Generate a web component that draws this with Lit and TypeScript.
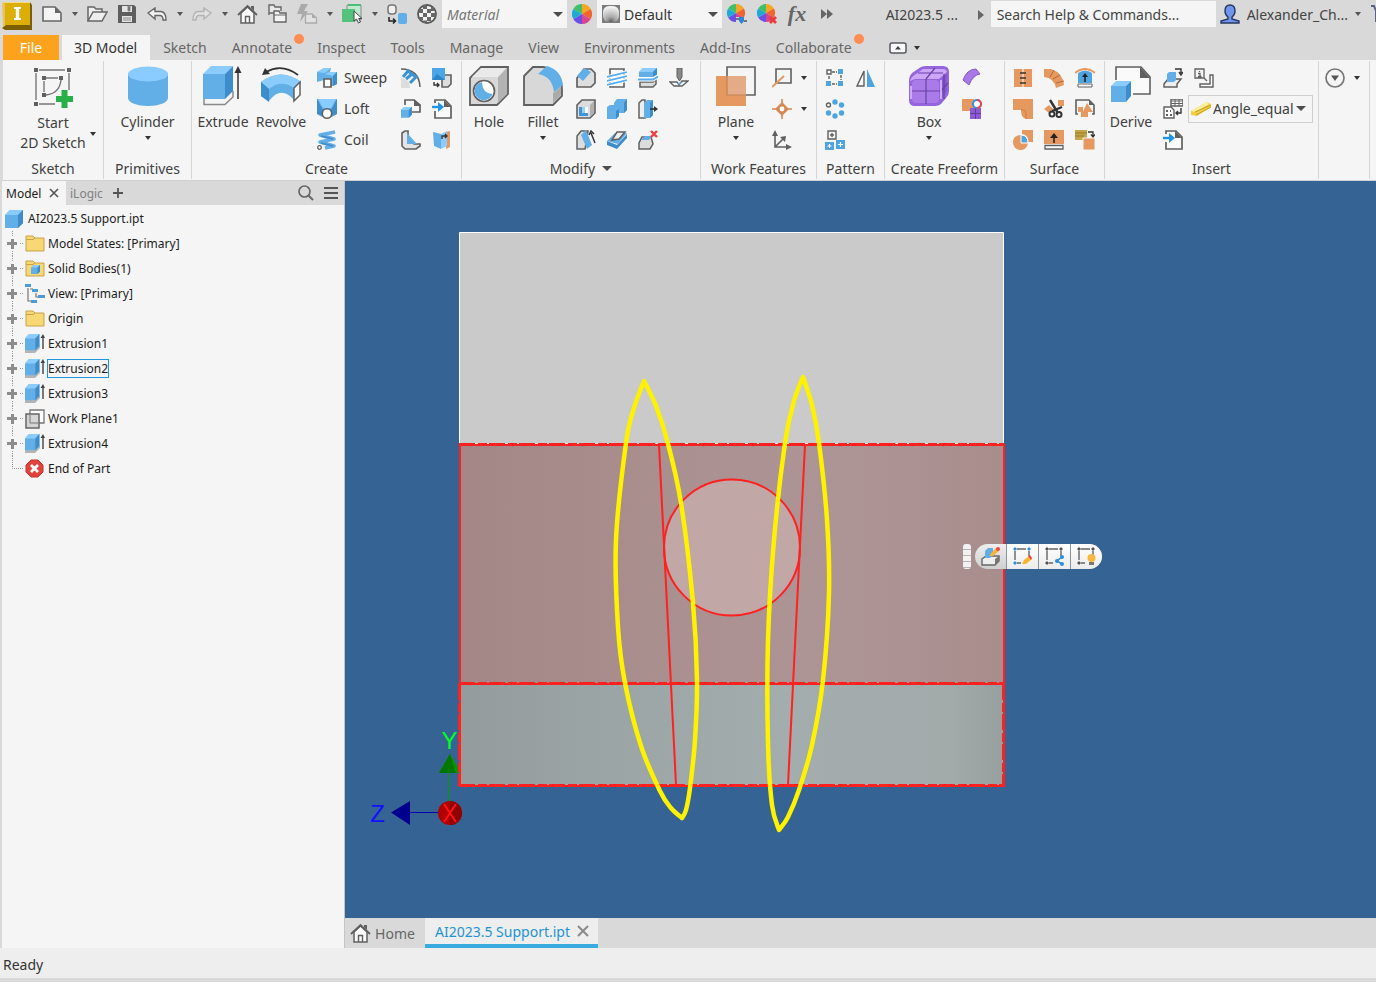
import { LitElement, html, svg, css, nothing } from "lit";
import type { TemplateResult } from "lit";
import { customElement, property } from "lit/decorators.js";
import { classMap } from "lit/directives/class-map.js";

type Art = { w: number; h: number; art: TemplateResult };
const art = (w: number, h: number, a: TemplateResult): Art => ({ w, h, art: a });
const G = "#606060";
const B = "#62aee6";
const L = "#8accff";
const D = "#3d8ccb";
const O = "#e5985f";

const cube = svg`<path d="M0 5L5 0H18V13L13 18H0Z" fill=${B}/><path d="M0 5L5 0H18L13 5Z" fill=${L}/><path d="M13 5L18 0V13L13 18Z" fill=${D}/>`;
const wheel = svg`
  <path d="M10 10L10 0A10 10 0 0 1 18.7 5Z" fill="#f6a623"/><path d="M10 10L18.7 5A10 10 0 0 1 18.7 15Z" fill="#f0642d"/>
  <path d="M10 10L18.7 15A10 10 0 0 1 10 20Z" fill="#d9468f"/><path d="M10 10L10 20A10 10 0 0 1 1.3 15Z" fill="#6b4ee6"/>
  <path d="M10 10L1.3 15A10 10 0 0 1 1.3 5Z" fill="#1fa9d4"/><path d="M10 10L1.3 5A10 10 0 0 1 10 0Z" fill="#3fbf6a"/>`;
const smallCubeGrey = svg`<path d="M1 6L6 1H19V14L14 19H1Z" fill="#dcdcdc" stroke=${G} stroke-width="1.6"/><path d="M14 6L18 2V14L14 18Z" fill="#b0b0b0"/>`;
const folder = svg`<path d="M1 2H8L10 4H19V17H1Z" fill="#f8d775" stroke="#c9a24a"/><path d="M1 5.500H8L10 4" fill="none" stroke="#c9a24a"/>`;
const house = svg`<path d="M4 9V19H17V9L10.500 3Z" fill="#f8f8f8" stroke=${G} stroke-width="1.500"/><path d="M1 11L10.500 2L20 11" fill="none" stroke=${G} stroke-width="1.800"/><path d="M14 2H17V7L14 4Z" fill=${G}/><path d="M8.500 19V12.500H12.500V19" fill="none" stroke=${G} stroke-width="1.400"/>`;
const corners = svg`<path d="M4 2H13M2 4V13M16 4V9M4 16H8" stroke="#666" stroke-width="1.400" fill="none"/><path d="M1 1H3V3H1ZM15 1H17V3H15ZM1 15H3V17H1Z" stroke-width="1"/>`;

const icons: Record<string, Art> = {
  logo: art(30, 30, svg`<path d="M0 3L3 2L4 26L1 28Z" fill="#e8c55c"/><path d="M0 28L4 25H28V2L30 5V30H3Z" fill="#7c5f00"/><path d="M3 2H28V25H3Z" fill="#dcae06"/><path d="M3 2H28V3H3Z" fill="#f4dc84"/><path d="M12 7H19V9H17.200V18H19V20H12V18H13.800V9H12Z" fill="#fff"/>`),
  new: art(20, 16, svg`<path d="M1 1H13L19 7V15H1Z" fill="#f4f4f4" stroke="#666" stroke-width="1.600"/><path d="M13 1V7H19Z" fill="#666"/>`),
  open: art(21, 18, svg`<path d="M1 16V2H7L9 4H15V7" fill="#f0f0f0" stroke="#666" stroke-width="1.500"/><path d="M1 16L6 7H20L15 16Z" fill="#eee" stroke="#666" stroke-width="1.500"/>`),
  save: art(18, 18, svg`<path d="M0 0H16L18 2V18H0Z" fill="#5e5e5e"/><path d="M4 1H14V7H4ZM4 11H14V17H4Z" fill="#e4e4e4"/><path d="M10 1H12V6H10ZM5 13H13M5 15H13" fill="#5e5e5e" stroke="#8a8a8a" stroke-width="1"/>`),
  undo: art(20, 14, svg`<path d="M1 6L8 1V4.500H14Q19 5 19 13H16Q16 8.500 13 8.500H8V12Z" fill="#f2f2f2" stroke="#666" stroke-width="1.400"/>`),
  redo: art(20, 14, svg`<path d="M19 6L12 1V4.500H6Q1 5 1 13H4Q4 8.500 7 8.500H12V12Z" fill="#e2e2e2" stroke="#b3b3b3" stroke-width="1.400"/>`),
  home: art(21, 20, house),
  copy: art(19, 20, svg`<path d="M1 11V1H6L7 3H13V7M1 9H6" fill="#e8e8e8" stroke="#666" stroke-width="1.400"/><path d="M6 7H11L12 9H18V18H6Z" fill="#f3f3f3" stroke="#666" stroke-width="1.400"/><path d="M6 11H18" stroke="#666"/>`),
  bolt: art(21, 20, svg`<path d="M4 0H11L7 7H11L3 18L5 10H0Z" fill="#aaa"/><path d="M8.500 10H15L19.500 14V19H8.500Z" fill="#e2e2e2" stroke="#aaa" stroke-width="1.300"/><path d="M15 10V14H19Z" fill="#aaa"/>`),
  pick: art(20, 20, svg`<path d="M5 1H19V16H5Z" fill="#bfe9cf" stroke="#8a8a8a"/><path d="M6 0H19V2H6Z" fill="#4dbd78"/><path d="M0 5H13V18H0Z" fill="#54c27d"/><path d="M12 7V17L14.500 15L16.500 19L18.500 18L16.700 14.500H20Z" fill="#fff" stroke="#444"/>`),
  convert: art(21, 20, svg`<rect x="1" y="1" width="8" height="9" rx="3" fill="#f0f0f0" stroke="#777" stroke-width="1.500"/><path d="M2 13V17H8M6 14.500L8.500 17L6 19.500" stroke="#222" stroke-width="1.500" fill="none"/><rect x="11" y="9" width="9" height="11" rx="2" fill=${B}/>`),
  ball: art(20, 20, svg`<circle cx="10" cy="10" r="9" fill="#f2f2f2" stroke="#555" stroke-width="1.800"/><path d="M6 1H10V5H6ZM14 3H17V7H14ZM10 5H14V9H10ZM2 5H6V9H2ZM6 9H10V13H6ZM14 9H19V13H14ZM2 13H6V16H2ZM10 13H14V17H10ZM6 16.500H10V19H6Z" fill="#666"/>`),
  wheel: art(20, 20, wheel),
  shade: art(18, 18, svg`<defs><radialGradient id="orb" cx=".5" cy="1" r=".95"><stop offset="0" stop-color="#5c5c5c"/><stop offset=".35" stop-color="#aaa"/><stop offset="1" stop-color="#f4f4f4"/></radialGradient></defs><path d="M0 0H18V18H0Z" fill="#7c7c7c"/><rect x="1" y="1" width="16" height="16" rx="6" fill="url(#orb)"/>`),
  wheelPin: art(20, 20, svg`<g transform="scale(.9)">${wheel}</g><path d="M9 13H20V20H9Z" fill="#d9d9d9"/><path d="M12 13H17V17L14.500 20L12 17Z" fill="#2b86d9"/><path d="M9 15H12M17 17H20" stroke="#555" stroke-width="1.500"/>`),
  wheelX: art(20, 20, svg`<g transform="scale(.9)">${wheel}</g><path d="M13 13L19 19M19 13L13 19" stroke="#ee3a3a" stroke-width="2.800"/>`),
  more: art(12, 10, svg`<path d="M0 0L6 5L0 10ZM6 0L12 5L6 10Z" fill="#666"/>`),
  user: art(20, 20, svg`<path d="M5 7Q5 1 10 1T15 7Q15 11 12 13V15L19 17V19H1V17L8 15V13Q5 11 5 7Z" fill="#6f95ee" stroke="#27365e" stroke-width="1.400"/>`),
  caret: art(6, 4, svg`<path d="M0 0H6L3 4Z" fill="#555"/>`),
  caretDark: art(6, 4, svg`<path d="M0 0H6L3 4Z" fill="#333"/>`),
  caretBig: art(10, 5, svg`<path d="M0 0H10L5 5Z" fill="#4d4d4d"/>`),
  right: art(6, 10, svg`<path d="M0 0L6 5L0 10Z" fill="#666"/>`),
  cart: art(6, 18, svg`<path d="M1 1H4L6 6V17" fill="none" stroke="#5b6480" stroke-width="2"/>`),
  panel: art(18, 12, svg`<rect x="1" y="1" width="16" height="10" rx="2" fill="#fafafa" stroke="#555b60" stroke-width="1.500"/><path d="M6 7.500H12L9 4Z" fill="#444"/>`),

  sketch: art(40, 42, svg`<path d="M6 3H32M3 6V33M36 6V23M6 37H22M13 11H25M11 14V25M28 13C27 22 22 27 13 28" fill="none" stroke="#777" stroke-width="1.400"/><path d="M1 1H5V5H1ZM34 1H38V5H34ZM1 35H5V39H1ZM9 9H13V13H9ZM26 9H30V13H26ZM9 26H13V30H9Z" fill="#606060"/><path d="M28.500 23H34.500V29H40V35H34.500V41H28.500V35H23V29H28.500Z" fill="#27b04a"/>`),
  cylinder: art(40, 40, svg`<path d="M0 8V32A20 8 0 0 0 40 32V8Z" fill=${B}/><ellipse cx="20" cy="8" rx="20" ry="7.500" fill=${L}/>`),
  extrude: art(40, 40, svg`<path d="M1 33V38.500H22L30 31V25" fill="#f4f4f4" stroke="#8a8a8a" stroke-width="1.500"/><path d="M0 8H22V33H0Z" fill=${B}/><path d="M0 8L8 0H30L22 8Z" fill=${L}/><path d="M22 8L30 0V25L22 33Z" fill=${D}/><path d="M35 5V33" stroke="#333" stroke-width="1.500"/><path d="M31.500 7L35 0L38.500 7Z" fill="#333"/>`),
  revolve: art(40, 40, svg`<path d="M0 16Q20 1 40 16L33 34Q20 19 8 35L0 30Z" fill=${B}/><path d="M0 16Q20 1 40 16L33 22Q20 13 8 23Z" fill=${L}/><path d="M0 16L8 23V36L0 30Z" fill=${D}/><path d="M33 22L39 16V29L33 35Z" fill="#fff" stroke=${G} stroke-width="1.500"/><path d="M37 9Q21 -3 5 6" fill="none" stroke="#333" stroke-width="1.800"/><path d="M1 9L4 2L9 8Z" fill="#333"/>`),
  sweep: art(20, 20, svg`<path d="M0 4L7 0H14L13 4H20V16L16 18H7V12L0 14Z" fill=${B}/><path d="M0 4L7 0H14L8 5ZM8 6L12 4H20L16 8Z" fill=${L}/><path d="M16 8L20 4V16L16 18Z" fill=${D}/><path d="M7 11H14V19H7Z" fill="#fff" stroke=${G} stroke-width="1.700"/>`),
  loft: art(20, 20, svg`<path d="M0 0H20V15L15 18H5L0 15Z" fill=${B}/><path d="M0 0L6 11V17L0 15ZM20 0L14 11V17L20 15Z" fill=${D}/><path d="M1 0H19L14 9H6Z" fill=${L}/><circle cx="10" cy="14.500" r="4.700" fill="#fff" stroke=${G} stroke-width="1.600"/>`),
  coil: art(20, 20, svg`<path d="M18 2L3 5L17 9L3 12L17 16L8 18" fill="none" stroke=${B} stroke-width="3.600" stroke-linejoin="round"/><path d="M4 6L16 9M4 13L16 16" stroke=${D} stroke-width="1.500"/><circle cx="2.500" cy="17.500" r="1.800" fill="#fff" stroke=${G} stroke-width="1.300"/>`),
  emboss: art(20, 20, svg`<path d="M0 1Q18 1 19 19" fill="none" stroke=${G} stroke-width="1.500"/><path d="M0 10Q9 11 9 20H0Z" fill="#ddd"/><path d="M2 9L7 3L15 9L9 15M5 11L11 6" fill="none" stroke="#3a94d6" stroke-width="3"/>`),
  derive: art(20, 20, svg`<path d="M4 6V1H13L19 6V13H11" fill="none" stroke=${G} stroke-width="1.700"/><path d="M13 0V7H20Z" fill=${G}/><g transform="translate(0 8) scale(.6)">${cube}</g>`),
  rib: art(20, 20, svg`<path d="M1 3L4 1H7V8L13 14H19V16L15 19H4L1 16Z" fill="#e4e4e4" stroke=${G} stroke-width="1.600"/><path d="M6 3V14H16Z" fill=${B}/>`),
  decal: art(20, 20, svg`<path d="M10 8L13 7H19V16L16 19H10Z" fill="#ddd" stroke=${G} stroke-width="1.600"/><path d="M0 0H13V12H0Z" fill="#4aa6e6"/><path d="M0 12L5 6L13 12Z" fill="#2e86c8"/><path d="M2 14V17H7M5 15L7 17L5 19" fill="none" stroke="#333" stroke-width="1.400"/>`),
  importIn: art(20, 20, svg`<path d="M3 4V1H13L19 7V19H3V12" fill="#fafafa" stroke=${G} stroke-width="1.700"/><path d="M12 1V8H19Z" fill=${G}/><path d="M0 8H7" stroke="#2294e8" stroke-width="2.400"/><path d="M6 3L12 8L6 13Z" fill="#2294e8"/>`),
  unwrap: art(20, 20, svg`<path d="M14 2L18 1V17L14 19Z" fill=${O}/><path d="M1 2L9 4V19L2 16Z" fill=${B}/><path d="M9 4L15 1V16L9 19Z" fill=${L}/><path d="M10 9V6H15M13 4L15 6L13 8" fill="none" stroke="#333" stroke-width="1.400"/>`),
  hole: art(40, 40, svg`<path d="M1 12L12 1H39V28L28 39H1Z" fill="#d8d8d8" stroke=${G} stroke-width="1.800"/><path d="M29 11L38 2V28L29 37Z" fill="#b3b3b3"/><path d="M3 11L12 2H37L29 11Z" fill="#eaeaea"/><circle cx="15" cy="25" r="10.500" fill="#fff" stroke=${G} stroke-width="1.700"/><path d="M13 16A9.200 9.200 0 1 0 23.500 28Q13 27 13 16Z" fill=${B}/>`),
  fillet: art(40, 40, svg`<path d="M1 10L10 1H20Q39 4 39 24V30L30 39H1Z" fill="#d8d8d8" stroke=${G} stroke-width="1.800"/><path d="M30 27L38 21V29L30 37Z" fill="#aaa"/><path d="M15 8L24 0Q38 4 40 19L31 26Q29 10 15 8Z" fill=${B}/>`),
  chamfer: art(20, 20, svg`<path d="M1 10V19H15L19 15V5L15 1H8Z" fill="#dedede" stroke=${G} stroke-width="1.700"/><path d="M1 8L8 0L15 4L7 13Z" fill=${B}/>`),
  thread: art(20, 20, svg`<path d="M3 1H17V19H3Z" fill="#fafafa" stroke=${G} stroke-width="1.600"/><path d="M0 9L20 4M0 13L20 8M0 17L20 12" stroke="#fff" stroke-width="3.500"/><path d="M0 9L20 4M0 13L20 8M0 17L20 12" stroke="#55aced" stroke-width="1.700"/>`),
  split: art(20, 20, svg`<path d="M2 14H15L18 11V16L15 19H2Z" fill="#ddd" stroke=${G} stroke-width="1.500"/><path d="M1 4L5 0H19V7L15 9H1Z" fill=${B}/><path d="M1 4L5 0H19L15 4Z" fill=${L}/><path d="M15 4L19 0V7L15 9Z" fill=${D}/><path d="M0 11.500H15L20 8.500" stroke="#fff" stroke-width="4" fill="none"/><path d="M0 11.500H15L20 8.500" stroke="#55aced" stroke-width="2" fill="none"/>`),
  mark: art(20, 20, svg`<path d="M8 0H13V9L10.500 13L8 9Z" fill="#888" stroke=${G}/><path d="M1 14H8L10 17L13 13H19L13 18H5Z" fill="#fafafa" stroke=${G} stroke-width="1.300"/><path d="M8 15L14 14L10 17Z" fill=${B}/>`),
  shell: art(20, 20, svg`${smallCubeGrey}<path d="M3 8H12V17H3Z" fill="#fff"/><path d="M3 8H6V14H12V17H3Z" fill="#3f95d7"/><path d="M6 8H9V14H6Z" fill="#9ad0f5"/>`),
  combine: art(20, 20, svg`<path d="M0 8L3 6H7V4L10 0H20V11L17 14H12V17L9 20H0Z" fill=${B}/><path d="M17 4L20 0V11L17 14ZM9 12L12 10V17L9 20Z" fill=${D}/>`),
  thicken: art(20, 20, svg`<path d="M1 4L4 1H7V19H1Z" fill="#eee" stroke=${G} stroke-width="1.500"/><path d="M6 4L9 1H15V16L12 19H6Z" fill=${B}/><path d="M12 4L15 1V16L12 19Z" fill=${D}/><path d="M12 10H17" stroke="#333" stroke-width="1.600"/><path d="M16 7L20 10L16 13Z" fill="#333"/>`),
  draft: art(20, 20, svg`<path d="M1 19V6L5 1H12L9 19Z" fill="#ddd" stroke=${G} stroke-width="1.500"/><path d="M5 5L10 0L16 15L11 19Z" fill=${B}/><path d="M15 3L19 13M13 5L15 1L18 4" stroke="#333" stroke-width="1.500" fill="none"/>`),
  direct: art(20, 20, svg`<path d="M0 11V15L10 19L20 8V4L10 15Z" fill=${D}/><path d="M0 11L8 3H20L11 14Z" fill=${B}/><path d="M5 10L10 2H18L12 9Z" fill="#eee" stroke=${G} stroke-width="1.500"/>`),
  deleteFace: art(20, 20, svg`<path d="M1 19V13L4 7H13L15 14L12 19Z" fill="#ddd" stroke=${G} stroke-width="1.500"/><path d="M3 10L7 6H14L11 10Z" fill=${B}/><path d="M13 1L19 7M19 1L13 7" stroke="#ed4242" stroke-width="2.400"/>`),
  plane: art(40, 40, svg`<path d="M11 1H39V29H11Z" fill="none" stroke=${G} stroke-width="1.600"/><path d="M0 10H30V40H0Z" fill=${O}/><path d="M11 10H30V29H11Z" fill="#e3ab86"/><path d="M11 10V29H30" fill="none" stroke="#bf8358" stroke-width="1.200"/>`),
  axis: art(20, 20, svg`<path d="M4 1H19V15H4Z" fill="none" stroke=${G} stroke-width="1.600"/><path d="M0 19L12 8" stroke=${O} stroke-width="2"/>`),
  point: art(20, 20, svg`<path d="M10 0V20M0 10H20" stroke="#d98752" stroke-width="1.600"/><path d="M10 3L17 10L10 17L3 10Z" fill="#d98752"/><circle cx="10" cy="10" r="2.400" fill="#fff"/>`),
  ucs: art(20, 20, svg`<path d="M3 3V17H17M3 17L12 8" fill="none" stroke=${G} stroke-width="1.600"/><path d="M0 6L3 0L6 6ZM14 14L20 17L14 20ZM8 7L14 6L13 12Z" fill=${G}/>`),
  rectPat: art(20, 20, svg`<path d="M7 4H12M7 16H12M4 8V12M16 7V12" stroke=${G} stroke-width="1.400" stroke-dasharray="3 1"/><path d="M2 2H6V6H2Z" fill="#fff" stroke=${G} stroke-width="1.400"/><path d="M13 1H18V6H13ZM1 13H6V18H1ZM13 13H18V18H13Z" fill="#4fa3de"/>`),
  circPat: art(20, 20, svg`<circle cx="3.500" cy="6" r="2" fill="#fff" stroke=${G} stroke-width="1.400"/><g fill="#4fa3de"><circle cx="10" cy="3" r="2.700"/><circle cx="16.500" cy="6" r="2.700"/><circle cx="16.500" cy="14" r="2.700"/><circle cx="10" cy="17" r="2.700"/><circle cx="3.500" cy="14" r="2.700"/></g>`),
  sketchPat: art(20, 20, svg`<path d="M3 1H11V9H3ZM7 3V7M5 5H9" fill="none" stroke=${G} stroke-width="1.400"/><path d="M0 12H9V20H0ZM11 10H20V19H11Z" fill="#4fa3de"/><path d="M4.500 14V18M2.500 16H6.500M15.500 12V17M13 14.500H18" stroke="#fff" stroke-width="1.200"/>`),
  mirror: art(20, 20, svg`<path d="M8 3V18H1Z" fill="none" stroke=${G} stroke-width="1.400"/><path d="M11 1L19 19H11Z" fill="#4fa3de"/>`),
  boxForm: art(40, 40, svg`<path d="M0 15Q0 8 6 5L12 1Q14 0 18 0H34Q40 0 40 6V25Q40 29 37 32L32 38Q30 40 26 40H6Q0 40 0 34Z" fill="#9465dc"/><path d="M1 15Q2 11 7 8L14 3H34Q37 3 38 6L30 13H6Z" fill="#cda6fa"/><rect x="3" y="14" width="27" height="23" rx="4" fill="#aa7be8"/><path d="M33 12L38 7V25L33 32Z" fill="#8857d2"/><path d="M17 13V38M3 25H32L39 17M17 13L26 2M9 7H34M35 8V33" fill="none" stroke="#67419f" stroke-width="1.200"/><path d="M2 20V33M32 14V33" stroke="#d9bdfb" stroke-width="1.600"/>`),
  faceForm: art(20, 20, svg`<path d="M1 12Q5 1 14 1L18 6Q11 7 7 17Z" fill="#a878e6" stroke="#8757ca"/>`),
  convertForm: art(20, 20, svg`<path d="M0 0H12V12H0Z" fill=${O}/><path d="M8 9H19V20H8Z" fill="#8d5ad3"/><path d="M13.500 9V20M8 14.500H19" stroke="#5f3ba1"/><circle cx="15" cy="5" r="4" fill="#fff" stroke="#2d93e5" stroke-width="2"/><path d="M15 1A4 4 0 0 1 15 9" fill="none" stroke="#ee4848" stroke-width="2"/>`),
  stitch: art(20, 20, svg`<path d="M1 1H19V19H1Z" fill=${O}/><path d="M10 0V20" stroke="#fff" stroke-width="1"/><path d="M7 5H13M7 10H13M7 15H13" stroke="#333" stroke-width="1.500"/>`),
  ruled: art(20, 20, svg`<path d="M0 1H7Q19 5 20 17L12 20Q10 10 0 9Z" fill=${O}/><path d="M6 9L10 2M9 11L16 7M12 15L20 13" stroke="#b46c38"/>`),
  replace: art(20, 20, svg`<path d="M0 5Q10 -3 20 5" fill="none" stroke=${O} stroke-width="2"/><path d="M3 5Q10 0 17 5V15H3Z" fill="#4fa3de"/><path d="M10 14V7" stroke="#222" stroke-width="1.600"/><path d="M7 9L10 5L13 9Z" fill="#222"/><path d="M3 16H17V19H3Z" fill="#fff" stroke=${G}/>`),
  patch: art(20, 20, svg`<path d="M0 0H20V20H13Q8 19 8 11H0Z" fill=${O}/><path d="M8 11H11Q13 11 13 16V20" fill="none" stroke="#cf7f45"/>`),
  trim: art(20, 20, svg`<path d="M14 1H20V7H14ZM0 10L5 6L9 10L5 14Z" fill=${O}/><path d="M6 1L14 14M18 8L8 12" stroke="#333" stroke-width="2.400"/><circle cx="15" cy="15.500" r="2.500" fill="none" stroke="#333" stroke-width="2"/><circle cx="8" cy="15" r="2.500" fill="none" stroke="#333" stroke-width="2"/>`),
  repair: art(20, 20, svg`<path d="M3 15H1V1H14L19 6V15H17" fill="none" stroke=${G} stroke-width="1.600"/><path d="M14 1V6H19Z" fill=${G}/><path d="M3 8H8V13H3ZM12 4L18 13H8ZM6 12H13V18H6Z" fill=${O}/>`),
  extend: art(20, 20, svg`<path d="M0 12A7.500 7.500 0 1 0 15 13L9 9V5Q0 5 0 12ZM9 0H20V12H15Q16 5 9 4Z" fill=${O}/><path d="M8 5Q15 5 15 13H8Z" fill="#4fa3de" stroke="#fff"/>`),
  boundary: art(20, 20, svg`<path d="M0 0H20V14H0Z" fill=${O}/><path d="M10 13V6" stroke="#222" stroke-width="1.600"/><path d="M6 8L10 3L14 8Z" fill="#222"/><path d="M1 15.500H19V19H1Z" fill="#fff" stroke=${G} stroke-width="1.300"/>`),
  fit: art(20, 20, svg`<path d="M0 0H12V10H0Z" fill="#c4a64a"/><path d="M0 3H12M0 6H9" stroke="#937a28"/><path d="M8 8H20V20H8Z" fill=${O} stroke="#f5f5f5"/><path d="M13 2H18V6M16 4.500L18 7L20 4.500" fill="none" stroke="#333" stroke-width="1.300"/>`),
  deriveBig: art(40, 40, svg`<path d="M5 14V1H30L39 11V28H22" fill="#fafafa" stroke=${G} stroke-width="1.600"/><path d="M29 1L39 12H29Z" fill=${G}/><path d="M0 20H15V36H0Z" fill=${B}/><path d="M0 20L5 15H20L15 20Z" fill=${L}/><path d="M15 20L20 15V30L15 36Z" fill=${D}/>`),
  place: art(20, 20, svg`<path d="M1 16L5 11H18L14 16V19H1Z" fill="#eee" stroke=${G} stroke-width="1.500"/><path d="M4 6L6 4H13V12L11 14H4Z" fill=${B}/><path d="M12 1H18V5M16 4L18 7L20 4" fill="none" stroke="#333" stroke-width="1.400"/>`),
  table: art(20, 20, svg`<path d="M8 0H20V7H8Z" fill="#fff" stroke=${G} stroke-width="1.400"/><path d="M8 2H20M8 4.500H20M12 0V7M16 0V7" stroke=${G}/><path d="M1 8H8L11 11V19H1Z" fill="#fff" stroke=${G} stroke-width="1.400"/><path d="M3 12H5M7 12H8M3 16H5M7 16H9" stroke=${G} stroke-width="2"/><path d="M18 9V14H13M15 12L13 14L15 16" fill="none" stroke="#333" stroke-width="1.400"/>`),
  callout: art(20, 20, svg`<path d="M1 1H10V10H1ZM5.500 3V4M4 5.500H6V8M4 8.500H7.500M10 10L13 13" fill="none" stroke=${G} stroke-width="1.300"/><path d="M16 7H19V19H6V16H16Z" fill="#fff" stroke=${G} stroke-width="1.400"/>`),
  angle: art(20, 16, svg`<path d="M0 10L16 1L20 3V6L6 15L0 14Z" fill="#f3cf45"/><path d="M0 10L16 1L18 3L4 11Z" fill="#fdf0a0"/><path d="M4 11L20 4M5 14L20 6" stroke="#c7a020"/>`),
  circleDown: art(20, 20, svg`<circle cx="10" cy="10" r="9" fill="#f5f5f5" stroke="#777" stroke-width="1.700"/><path d="M6 7.500H14L10 13Z" fill="#555"/>`),

  x: art(10, 10, svg`<path d="M1 1L9 9M9 1L1 9" stroke="#555" stroke-width="1.600"/>`),
  xLight: art(12, 12, svg`<path d="M1 1L11 11M11 1L1 11" stroke="#8a8a8a" stroke-width="2"/>`),
  plus: art(10, 10, svg`<path d="M5 0V10M0 5H10" stroke="#555" stroke-width="1.800"/>`),
  search: art(16, 16, svg`<circle cx="6.500" cy="6.500" r="5.500" fill="none" stroke="#666" stroke-width="1.700"/><path d="M10.500 10.500L15 15" stroke="#666" stroke-width="2"/>`),
  menu: art(14, 12, svg`<path d="M0 1H14M0 6H14M0 11H14" stroke="#555" stroke-width="1.800"/>`),
  part: art(18, 18, cube),
  folder: art(20, 20, folder),
  bodies: art(20, 20, svg`${folder}<g transform="translate(6 6) scale(.5)">${cube}</g>`),
  view: art(20, 20, svg`<path d="M3 4V17H6M5 5H8M11 9V13H13" fill="none" stroke="#777" stroke-width="1.200"/><path d="M0 0H6V3H0ZM7 5H13V8H7ZM13 11H20V14H13ZM6 16H12V19H6Z" fill="#4a9bd8"/>`),
  feature: art(20, 20, svg`<path d="M0 16H10L15 11V14L10 19H0Z" fill="#b4b4b4"/><g transform="scale(.8 .9)">${cube}</g><path d="M18 2V15" stroke="#444" stroke-width="1.400"/><path d="M15.500 4L18 0L20 4Z" fill="#444"/>`),
  workPlane: art(20, 20, svg`<path d="M5 1H19V14H5Z" fill="#fff" stroke="#777" stroke-width="1.300"/><path d="M1 5H14V19H1Z" fill="#ccc" fill-opacity=".8" stroke="#666" stroke-width="1.500"/><path d="M5 5V14H14" fill="none" stroke="#888"/>`),
  end: art(20, 20, svg`<path d="M6 1H13L18 6V13L13 18H6L1 13V6Z" fill="#e0433c" stroke="#c43530"/><path d="M6 6L13 13M13 6L6 13" stroke="#fff" stroke-width="2.800"/>`),

  editFeature: art(20, 19, svg`<path d="M1 12L5 9H18V14L14 18H1Z" fill="#eee" stroke="#666" stroke-width="1.400"/><path d="M14 12L18 9V14L14 18Z" fill="#777"/><path d="M4 4L7 1H12V8L9 11H4Z" fill=${B}/><path d="M9 9L10 6L15 1L18 4L12 9Z" fill="#f8b43c"/><circle cx="17" cy="2" r="2" fill="#ee4444"/>`),
  editSketch: art(20, 19, svg`<g fill="#2a8fe0" stroke="#2a8fe0">${corners}</g><path d="M9 17L11 13L16 9L19 12L13 17Z" fill="#fbb62f"/><path d="M15 9L17 8L19 11L18 13Z" fill="#ee4444"/>`),
  shareSketch: art(20, 19, svg`<g fill="#555" stroke="#555">${corners}</g><path d="M17 10L12 14L17 17" fill="none" stroke="#2a8fe0" stroke-width="1.600"/><g fill="#2a8fe0"><circle cx="17" cy="10" r="2"/><circle cx="12" cy="14" r="2"/><circle cx="17" cy="17" r="2"/></g>`),
  showSketch: art(20, 19, svg`<g fill="#555" stroke="#555">${corners}</g><circle cx="14.500" cy="11" r="4" fill="#f6b73c"/><path d="M12 15H17V18H12Z" fill="#777"/>`),
};

@customElement("cad-icon")
class CadIcon extends LitElement {
  @property() name = "";
  static styles = css`
    :host { display: inline-flex; flex: none; }
    svg { display: block; }
  `;
  render() {
    const i = icons[this.name];
    return i ? html`<svg width=${i.w} height=${i.h} viewBox="0 0 ${i.w} ${i.h}" aria-hidden="true">${i.art}</svg>` : nothing;
  }
}

const ico = (name: string) => html`<cad-icon name=${name}></cad-icon>`;

const buttonReset = css`
  * { box-sizing: border-box; }
  button, select, input { font: inherit; color: inherit; margin: 0; padding: 0; border: 0; background: none; border-radius: 0; }
  button { display: inline-flex; align-items: center; justify-content: center; cursor: default; white-space: nowrap; }
  select { appearance: none; }
`;

@customElement("cad-quickbar")
class CadQuickbar extends LitElement {
  static styles = [buttonReset, css`
    :host { display: flex; align-items: center; height: 31px; padding-bottom: 3px; color: #444; font-size: 14px; overflow: hidden; }
    .logo { width: 37px; padding-left: 2px; justify-content: flex-start; align-self: flex-start; flex: none; }
    .tool { width: 30px; height: 26px; }
    .drop { width: 15px; height: 26px; }
    .pick { display: grid; grid-template-columns: 1fr 16px; align-items: center; width: 125px; height: 28px; background: #f5f5f5; color: #333; }
    .pick select { grid-area: 1 / 1 / 2 / 3; width: 100%; height: 28px; padding-left: 5px; }
    .pick cad-icon { pointer-events: none; }
    .pick .caret { grid-area: 1 / 2; margin-left: 2px; }
    .pick .lead { grid-area: 1 / 1; margin-left: 5px; }
    .material select { font-style: italic; color: #777; }
    .look select { padding-left: 27px; }
    .fx { font: italic bold 22px/22px "Liberation Serif", serif; color: #666; }
    .doc { margin-left: auto; width: 92px; }
    .help { width: 225px; height: 26px; padding: 0 6px; background: #f5f5f5; color: #333; font-size: 14px; }
    .help::placeholder { color: #444; opacity: 1; }
    .play { width: 10px; margin-right: 3px; }
    .account { gap: 7px; padding-left: 4px; }
    .cart { width: 15px; justify-content: flex-end; }
  `];
  render() {
    const tool = (n: string, label: string, drop = false) => html`<button class="tool" aria-label=${label}>${ico(n)}</button>${drop ? html`<button class="drop" aria-label="${label} options">${ico("caret")}</button>` : nothing}`;
    return html`
      <button class="logo" aria-label="Application menu">${ico("logo")}</button>
      ${tool("new", "New", true)}${tool("open", "Open")}${tool("save", "Save")}${tool("undo", "Undo", true)}${tool("redo", "Redo", true)}
      ${tool("home", "Home")}${tool("copy", "Projects")}${tool("bolt", "Update", true)}${tool("pick", "Select", true)}${tool("convert", "Convert")}${tool("ball", "Appearance")}
      <div class="pick material"><select aria-label="Material"><option>Material</option></select><cad-icon class="caret" name="caretBig"></cad-icon></div>
      ${tool("wheel", "Colour wheel")}
      <div class="pick look"><select aria-label="Appearance style"><option>Default</option></select><cad-icon class="lead" name="shade"></cad-icon><cad-icon class="caret" name="caretBig"></cad-icon></div>
      ${tool("wheelPin", "Adjust")}${tool("wheelX", "Clear")}
      <button class="tool fx" aria-label="Parameters">fx</button>
      <button class="tool" aria-label="More">${ico("more")}</button>
      <span class="doc">AI2023.5 ...</span>
      <span class="play">${ico("right")}</span>
      <input class="help" type="search" aria-label="Search help" placeholder="Search Help &amp; Commands..." />
      <button class="account">${ico("user")}Alexander_Ch...${ico("caret")}</button>
      <button class="cart" aria-label="Store">${ico("cart")}</button>`;
  }
}

const tabNames = ["File", "3D Model", "Sketch", "Annotate", "Inspect", "Tools", "Manage", "View", "Environments", "Add-Ins", "Collaborate"];

@customElement("cad-tabs")
class CadTabs extends LitElement {
  static styles = [buttonReset, css`
    :host { display: flex; align-items: flex-end; height: 29px; padding-left: 3px; color: #666; font-size: 14px; }
    .tab { position: relative; height: 25px; padding: 0 12px 0 13px; }
    .file { background: #fba31c; color: #fff; width: 56px; margin-right: 3px; padding: 0; }
    .active { background: #f5f5f5; color: #333; padding: 0 13px 0 12px; }
    .new::after { content: ""; position: absolute; right: 0; top: -1px; width: 10px; height: 10px; border-radius: 50%; background: #ff8c50; }
    .mode { height: 25px; gap: 7px; margin-left: 25px; }
  `];
  render() {
    return html`${tabNames.map((t, i) => html`<button class=${classMap({ tab: true, file: i === 0, active: i === 1, new: t === "Annotate" || t === "Collaborate" })}>${t}</button>`)}
      <button class="mode" aria-label="Ribbon display">${ico("panel")}${ico("caretDark")}</button>`;
  }
}

@customElement("cad-ribbon")
class CadRibbon extends LitElement {
  static styles = [buttonReset, css`
    :host { display: grid; grid-template-columns: 101px 88px 270px 239px 116px 68px 120px 100px 214px 51px 1fr; height: 121px; margin-left: 3px; background: #f5f5f5; border-bottom: 1px solid #d0d0d0; color: #404040; font-size: 14px; line-height: 20px; }
    .panel { display: flex; flex-direction: column; border-right: 1px solid #d6d6d6; margin: 1px 0; min-width: 0; }
    .tools { display: flex; flex: 1; justify-content: center; padding-top: 1px; }
    .name { margin: 0; height: 21px; font-size: 14px; font-weight: 400; text-align: center; white-space: nowrap; display: flex; gap: 7px; align-items: center; justify-content: center; }
    .big { flex: none; flex-direction: column; justify-content: flex-start; height: 80px; margin-top: 4px; }
    .big .cap { height: 20px; margin-top: 6px; }
    .big .drop-mark { margin-top: 4px; }
    .w60 { width: 60px; }
    .w58 { width: 58px; }
    .w54 { width: 54px; }
    .w52 { width: 52px; }
    .start { flex-direction: row; align-items: flex-end; height: 87px; padding-left: 10px; }
    .start .stack { display: flex; flex-direction: column; align-items: center; }
    .start .stack span { height: 20px; }
    .start .stack .first { margin-top: 4px; }
    .start .side { margin: 0 0 17px 4px; }
    .grid { display: grid; grid-auto-flow: column; grid-template-rows: repeat(3, 31px); grid-auto-columns: 31px; }
    .small { width: 31px; height: 31px; }
    .rows { display: grid; grid-template-rows: repeat(3, 31px); }
    .line { display: flex; align-items: center; }
    .labelled { gap: 7px; justify-content: flex-start; padding-left: 7px; height: 31px; width: 85px; }
    .drop { width: 14px; }
    .left { justify-content: flex-start; }
    .inset { justify-content: flex-start; padding-left: 2px; }
    .pick { display: grid; grid-template-columns: 24px 1fr 16px; align-items: center; width: 125px; height: 28px; border: 1px solid #cfcfcf; }
    .pick select { grid-area: 1 / 1 / 2 / 4; width: 100%; height: 26px; padding-left: 24px; }
    .pick .lead { grid-area: 1 / 1; margin-left: 2px; pointer-events: none; }
    .pick .caret { grid-area: 1 / 3; pointer-events: none; }
  `];
  private small(n: string) { return html`<button class="small" aria-label=${n}>${ico(n)}</button>`; }
  private big(n: string, label: string, cls: string, drop = false) {
    return html`<button class="big ${cls}">${ico(n)}<span class="cap">${label}</span>${drop ? html`<cad-icon class="drop-mark" name="caretDark"></cad-icon>` : nothing}</button>`;
  }
  private grid(names: string[]) { return html`<div class="grid">${names.map((n) => this.small(n))}</div>`; }
  private panel(name: string | TemplateResult, body: TemplateResult, cls = "") {
    return html`<section class="panel"><div class="tools ${cls}">${body}</div><h2 class="name">${name}</h2></section>`;
  }
  render() {
    return html`
      ${this.panel("Sketch", html`<button class="big start"><span class="stack">${ico("sketch")}<span class="first">Start</span><span>2D Sketch</span></span><cad-icon class="side" name="caretDark"></cad-icon></button>`)}
      ${this.panel("Primitives", this.big("cylinder", "Cylinder", "w60", true))}
      ${this.panel("Create", html`
        ${this.big("extrude", "Extrude", "w58")}${this.big("revolve", "Revolve", "w58")}
        <div class="rows">${[["sweep", "Sweep"], ["loft", "Loft"], ["coil", "Coil"]].map(([n, l]) => html`<button class="labelled">${ico(n)}${l}</button>`)}</div>
        ${this.grid(["emboss", "derive", "rib", "decal", "importIn", "unwrap"])}`, "inset")}
      ${this.panel(html`Modify ${ico("caretBig")}`, html`
        ${this.big("hole", "Hole", "w54")}${this.big("fillet", "Fillet", "w54", true)}
        ${this.grid(["chamfer", "shell", "draft", "thread", "combine", "direct", "split", "thicken", "deleteFace", "mark"])}`, "left")}
      ${this.panel("Work Features", html`
        ${this.big("plane", "Plane", "w60", true)}
        <div class="rows">
          <div class="line">${this.small("axis")}<button class="drop" aria-label="Axis options">${ico("caretDark")}</button></div>
          <div class="line">${this.small("point")}<button class="drop" aria-label="Point options">${ico("caretDark")}</button></div>
          <div class="line">${this.small("ucs")}</div>
        </div>`)}
      ${this.panel("Pattern", this.grid(["rectPat", "circPat", "sketchPat", "mirror"]), "inset")}
      ${this.panel("Create Freeform", html`${this.big("boxForm", "Box", "w54", true)}${this.grid(["faceForm", "convertForm"])}`)}
      ${this.panel("Surface", this.grid(["stitch", "patch", "extend", "ruled", "trim", "boundary", "replace", "repair", "fit"]), "inset")}
      ${this.panel("Insert", html`
        ${this.big("deriveBig", "Derive", "w52")}
        ${this.grid(["place", "table", "importIn"])}
        <div class="rows">
          <div class="line">${this.small("callout")}</div>
          <div class="line"><div class="pick"><select aria-label="Shape"><option>Angle_equal</option></select><cad-icon class="lead" name="angle"></cad-icon><cad-icon class="caret" name="caretBig"></cad-icon></div></div>
        </div>`, "left")}
      ${this.panel("", html`<div class="rows"><div class="line">${this.small("circleDown")}<button class="drop" aria-label="More options">${ico("caretDark")}</button></div></div>`, "left")}`;
  }
}

const nodes: [string, string][] = [
  ["folder", "Model States: [Primary]"], ["bodies", "Solid Bodies(1)"], ["view", "View: [Primary]"], ["folder", "Origin"],
  ["feature", "Extrusion1"], ["feature", "Extrusion2"], ["feature", "Extrusion3"], ["workPlane", "Work Plane1"], ["feature", "Extrusion4"], ["end", "End of Part"],
];

@customElement("cad-browser")
class CadBrowser extends LitElement {
  static styles = [buttonReset, css`
    :host { display: block; width: 345px; box-sizing: border-box; flex: none; background: #f5f5f5; border-left: 2px solid #d9d9d9; border-right: 1px solid #c4c4c4; color: #1c1c1c; font-family: "Noto Sans", "Open Sans", sans-serif; font-size: 12px; }
    .bar { display: flex; align-items: center; height: 24px; background: #d9d9d9; }
    .tab { display: flex; align-items: center; justify-content: space-between; height: 24px; width: 64px; padding: 0 7px 0 4px; background: #f5f5f5; }
    .other { color: #808080; padding: 0 10px 0 4px; }
    .tools { display: flex; gap: 10px; margin-left: auto; padding-right: 6px; }
    .tree { margin: 0; padding: 1px 0 0; list-style: none; }
    .row { display: flex; align-items: center; height: 25px; }
    .root { padding-left: 3px; gap: 5px; }
    .twist { width: 23px; height: 25px; }
    .text { margin-left: 2px; padding: 0 1px; height: 19px; line-height: 20px; }
    .chosen { outline: 1px solid #1e95dc; outline-offset: -1px; }
    svg { display: block; }
  `];
  render() {
    return html`
      <div class="bar"><div class="tab">Model<button aria-label="Close">${ico("x")}</button></div><button class="other">iLogic</button><button aria-label="Add tab">${ico("plus")}</button>
        <div class="tools"><button aria-label="Search">${ico("search")}</button><button aria-label="Menu">${ico("menu")}</button></div></div>
      <ul class="tree">
        <li class="row root">${ico("part")}AI2023.5 Support.ipt</li>
        ${nodes.map(([n, t], i) => {
          const last = i === nodes.length - 1;
          return html`<li class="row"><button class="twist" aria-label=${last ? "End" : "Expand"}><svg width="23" height="25">
            <path d=${last ? "M10.500 0V12.500H22" : "M10.500 0V25M18 12.500H22"} fill="none" stroke="#999" stroke-dasharray="1 1"/>
            ${last ? nothing : svg`<path d="M10.500 6V19M4 12.500H17" stroke="#f5f5f5" stroke-width="5"/><path d="M10.500 8V18M5 12.500H15" stroke="#8c8c8c" stroke-width="3"/>`}</svg></button>
            ${ico(n)}<span class=${classMap({ text: true, chosen: t === "Extrusion2" })}>${t}</span></li>`;
        })}
      </ul>`;
  }
}

type Pt = [number, number];
const spline = (p: Pt[]) => p.slice(0, -1).map((a, i) => {
  const b = p[i + 1], z = p[i - 1] ?? a, c = p[i + 2] ?? b;
  return `C${a[0] + (b[0] - z[0]) / 6} ${a[1] + (b[1] - z[1]) / 6} ${b[0] - (c[0] - a[0]) / 6} ${b[1] - (c[1] - a[1]) / 6} ${b[0]} ${b[1]}`;
}).join("");
const loop = (p: Pt[], q: Pt[]) => `M${p[0][0]} ${p[0][1]}${spline(p)}${spline(q)}Z`;
const leftLoop = loop(
  [[644, 381], [634, 408], [626, 443], [616, 540], [618, 627], [625, 683], [641, 746], [660, 791], [671, 808], [682, 818]],
  [[682, 818], [686, 810], [690, 788], [695, 740], [697, 680], [693, 603], [681, 503], [667, 440], [656, 406], [644, 381]]);
const rightLoop = loop(
  [[803, 377], [794, 401], [785, 443], [774, 540], [768, 640], [768, 743], [772, 805], [779, 830]],
  [[779, 830], [788, 817], [799, 790], [812, 745], [823, 680], [829, 593], [827, 520], [819, 443], [812, 405], [803, 377]]);

@customElement("cad-viewport")
class CadViewport extends LitElement {
  static styles = [buttonReset, css`
    :host { display: block; position: relative; flex: 1; min-height: 0; background: #356394; overflow: hidden; }
    .scene { display: block; width: 100%; height: 100%; }
    .axis { font-family: "Liberation Sans", sans-serif; font-size: 24px; text-anchor: middle; }
    .mini { position: absolute; left: 618px; top: 363px; display: flex; gap: 4px; }
    .grip { width: 8px; height: 25px; border-radius: 3px; background: repeating-linear-gradient(#f2f2f2 0 5px, #b5b5b5 5px 6px); }
    .pill { display: flex; gap: 1px; height: 25px; border-radius: 13px; overflow: hidden; background: #8494a5; }
    .pill button { width: 31px; background: linear-gradient(#fff, #ececec); }
    .pill button:first-child { background: linear-gradient(#eee, #cfcfcf); }
  `];
  render() {
    return html`
      <svg class="scene" viewBox="345 181 1031 737" role="img" aria-label="Part view">
        <defs>
          <linearGradient id="rose"><stop offset="0" stop-color="#a48686"/><stop offset=".45" stop-color="#ab9191"/><stop offset=".7" stop-color="#ae9595"/><stop offset="1" stop-color="#a98d8d"/></linearGradient>
          <linearGradient id="slate"><stop offset="0" stop-color="#939c9b"/><stop offset=".2" stop-color="#9aa3a3"/><stop offset=".6" stop-color="#a4adad"/><stop offset=".9" stop-color="#a2aaaa"/><stop offset="1" stop-color="#989f9f"/></linearGradient>
        </defs>
        <path d="M459.500 232.500H1003.500V444H459.500Z" fill="#cacaca" stroke="#fff"/>
        <path d="M460 444H1004V684H460Z" fill="url(#rose)"/><path d="M460 684H1004V786H460Z" fill="url(#slate)"/>
        <circle cx="732" cy="547.500" r="68" fill="#c2a7a7" stroke="#ff2020" stroke-width="2"/>
        <path d="M659 445L676 785M805 445L788 785" stroke="#ff2020" stroke-width="2" fill="none"/>
        <text class="axis" x="449.500" y="749" fill="#00ff1e">Y</text><text class="axis" x="377.500" y="822" fill="#1010ff">Z</text>
        <path d="M449.500 770V802" stroke="#00a000"/><path d="M450 754L461 773H439Z" fill="#009a00"/><path d="M450 754L456 773H439Z" fill="#007800"/>
        <path d="M410 812.500H440" stroke="#0000a8"/><path d="M391 812.500L410 801V825Z" fill="#00008c"/>
        <circle cx="450" cy="813" r="12" fill="#b00000"/><path d="M450 801A12 12 0 0 1 450 825Z" fill="#900000"/><path d="M444 804L456 822M456 804L444 822" stroke="#ff1414" stroke-width="2"/>
        <path d="M460 445H1004V786H460ZM460 684H1004" fill="none" stroke="#ff2020" stroke-width="2"/>
        <path d="M459 443.500H1004M459 682.500H1004M459 784.500H1004M458.500 684V786M1002.500 684V786" fill="none" stroke="#ff2020" stroke-dasharray="16 3 9 2"/>
        <path d=${leftLoop} fill="none" stroke="#fff200" stroke-width="4.500" stroke-linejoin="round"/>
        <path d=${rightLoop} fill="none" stroke="#fff200" stroke-width="4.500" stroke-linejoin="round"/>
      </svg>
      <div class="mini"><span class="grip"></span><div class="pill">
        ${[["editFeature", "Edit feature"], ["editSketch", "Edit sketch"], ["shareSketch", "Share sketch"], ["showSketch", "Sketch visibility"]].map(([n, l]) => html`<button aria-label=${l}>${ico(n)}</button>`)}
      </div></div>`;
  }
}

@customElement("app-root")
class AppRoot extends LitElement {
  static styles = [buttonReset, css`
    :host { display: flex; flex-direction: column; height: 100vh; background: #d9d9d9; font-family: "Noto Sans", "Open Sans", sans-serif; font-size: 14px; color: #444; }
    .work { display: flex; flex: 1; min-height: 0; }
    .main { display: flex; flex-direction: column; flex: 1; min-width: 0; }
    .docs { display: flex; height: 30px; background: #d9d9d9; color: #666; }
    .home { width: 80px; gap: 4px; padding-right: 5px; }
    .doc { display: flex; align-items: center; gap: 7px; padding: 0 9px 0 10px; background: #eee; border-bottom: 4px solid #38abdf; color: #1e94d2; white-space: nowrap; }
    .status { height: 34px; padding-left: 3px; line-height: 34px; background: #eee; border-bottom: 4px solid #d9d9d9; color: #333; }
  `];
  render() {
    return html`
      <cad-quickbar></cad-quickbar>
      <cad-tabs></cad-tabs>
      <cad-ribbon></cad-ribbon>
      <div class="work">
        <cad-browser></cad-browser>
        <main class="main">
          <cad-viewport></cad-viewport>
          <div class="docs"><button class="home">${ico("home")}Home</button><div class="doc">AI2023.5 Support.ipt<button aria-label="Close document">${ico("xLight")}</button></div></div>
        </main>
      </div>
      <footer class="status">Ready</footer>`;
  }
}
